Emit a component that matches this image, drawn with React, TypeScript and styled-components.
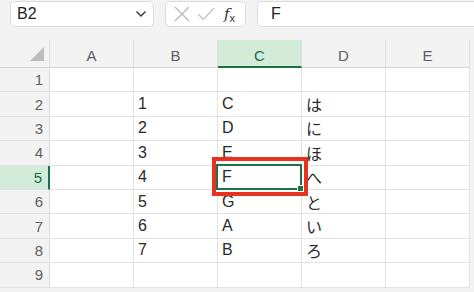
import React from 'react';
import styled, { createGlobalStyle } from 'styled-components';

const GlobalStyle = createGlobalStyle`
  html, body {
    margin: 0;
    padding: 0;
    background: #f3f3f3;
    font-family: "Liberation Sans", "Noto Sans CJK JP", sans-serif;
  }
`;

const columns = ['A', 'B', 'C', 'D', 'E'];

const rows: string[][] = [
  ['', '', '', '', ''],
  ['', '1', 'C', 'は', ''],
  ['', '2', 'D', 'に', ''],
  ['', '3', 'E', 'ほ', ''],
  ['', '4', 'F', 'へ', ''],
  ['', '5', 'G', 'と', ''],
  ['', '6', 'A', 'い', ''],
  ['', '7', 'B', 'ろ', ''],
  ['', '', '', '', ''],
];

const selCol = 2;
const selRow = 4;

export default function App() {
  return (
    <>
      <GlobalStyle />
      <Page>
        <Toolbar>
          <NameBox>
            <NameText>B2</NameText>
            <svg width="12" height="8" viewBox="0 0 12 8">
              <path d="M1.5 1.5 L6 6 L10.5 1.5" fill="none" stroke="#333" strokeWidth="1.4" />
            </svg>
          </NameBox>
          <IconBox>
            <svg width="20" height="20" viewBox="0 0 20 20">
              <path d="M3 3 L17 17 M17 3 L3 17" stroke="#b9b9b9" strokeWidth="1.3" fill="none" />
            </svg>
            <svg width="20" height="20" viewBox="0 0 20 20">
              <path d="M2 10 L7.5 15.5 L18 4" stroke="#c4c4c4" strokeWidth="1.3" fill="none" />
            </svg>
            <Fx>
              <i>f</i>
              <sub>x</sub>
            </Fx>
          </IconBox>
          <FormulaBox>F</FormulaBox>
        </Toolbar>
        <Grid>
          <Corner>
            <svg width="14" height="14" viewBox="0 0 14 14">
              <path d="M14 0 L14 14 L0 14 Z" fill="#bdbdbd" />
            </svg>
          </Corner>
          {columns.map((c, i) => (
            <ColHeader key={c} $active={i === selCol}>
              {c}
            </ColHeader>
          ))}
          {rows.map((r, ri) => (
            <React.Fragment key={ri}>
              <RowHeader $active={ri === selRow}>{ri + 1}</RowHeader>
              {r.map((v, ci) => {
                const selected = ri === selRow && ci === selCol;
                return (
                  <Cell key={ci} $selected={selected}>
                    {v}
                    {selected && (
                      <>
                        <Highlight />
                        <Selection>
                          <Handle />
                        </Selection>
                      </>
                    )}
                  </Cell>
                );
              })}
            </React.Fragment>
          ))}
        </Grid>
      </Page>
    </>
  );
}

const Page = styled.div`
  width: 474px;
  height: 292px;
  overflow: hidden;
  background: #f3f3f3;
`;

const Toolbar = styled.div`
  display: flex;
  align-items: flex-start;
  gap: 11px;
  height: 40px;
  padding: 1px 0 0 10px;
  box-sizing: border-box;
`;

const Box = styled.div`
  height: 26px;
  box-sizing: border-box;
  background: #ffffff;
  border: 1px solid #dcdcdc;
  border-radius: 5px;
  display: flex;
  align-items: center;
`;

const NameBox = styled(Box)`
  width: 144px;
  padding: 0 6px 0 6px;
  justify-content: space-between;
`;

const NameText = styled.span`
  font-size: 16px;
  color: #222;
`;

const IconBox = styled(Box)`
  width: 81px;
  padding: 0 4px 0 6px;
  gap: 4px;
`;

const Fx = styled.span`
  font-family: "DejaVu Serif", serif;
  font-size: 15px;
  color: #333;
  margin-left: 4px;
  sub {
    font-family: "Liberation Sans", sans-serif;
    font-size: 11px;
    vertical-align: -3px;
  }
`;

const FormulaBox = styled(Box)`
  flex: 1;
  padding-left: 13px;
  font-size: 16px;
  color: #222;
  border-right: none;
  border-radius: 5px 0 0 5px;
`;

const Grid = styled.div`
  display: grid;
  grid-template-columns: 50px repeat(5, 84px);
  grid-template-rows: 28px repeat(9, 24.4px);
`;

const Corner = styled.div`
  display: flex;
  align-items: flex-end;
  justify-content: flex-end;
  padding: 0 5px 6px 0;
  border-right: 1px solid #dedede;
  border-bottom: 1px solid #d6d6d6;
  background: #f3f3f3;
`;

const ColHeader = styled.div<{ $active?: boolean }>`
  display: flex;
  align-items: center;
  justify-content: center;
  padding-top: 4px;
  font-size: 15px;
  color: ${(p) => (p.$active ? '#1e6b3e' : '#606060')};
  background: ${(p) => (p.$active ? '#d3ebd9' : '#f3f3f3')};
  border-right: 1px solid #dedede;
  border-bottom: ${(p) => (p.$active ? '2px solid #1e7145' : '1px solid #d6d6d6')};
`;

const RowHeader = styled.div<{ $active?: boolean }>`
  display: flex;
  align-items: center;
  justify-content: flex-end;
  padding-right: 6px;
  font-size: 15px;
  color: ${(p) => (p.$active ? '#1e6b3e' : '#606060')};
  background: ${(p) => (p.$active ? '#d3ebd9' : '#f3f3f3')};
  border-right: ${(p) => (p.$active ? '2px solid #1e7145' : '1px solid #dedede')};
  border-bottom: 1px solid #e2e2e2;
`;

const Cell = styled.div<{ $selected?: boolean }>`
  position: relative;
  z-index: ${(p) => (p.$selected ? 2 : 'auto')};
  display: flex;
  align-items: center;
  padding-left: 4px;
  font-size: 16px;
  color: #2a2a2a;
  background: #ffffff;
  border-right: 1px solid #e3e3e3;
  border-bottom: 1px solid #e3e3e3;
`;

const Selection = styled.div`
  position: absolute;
  left: -2px;
  top: -2px;
  right: -1px;
  bottom: -1px;
  border: 2px solid #1e7145;
`;

const Handle = styled.div`
  position: absolute;
  right: -4px;
  bottom: -4px;
  width: 5px;
  height: 5px;
  background: #1e7145;
  border: 1px solid #fff;
`;

const Highlight = styled.div`
  position: absolute;
  left: -6px;
  top: -9px;
  right: -7px;
  bottom: -7px;
  border: 4px solid #e8321f;
`;
